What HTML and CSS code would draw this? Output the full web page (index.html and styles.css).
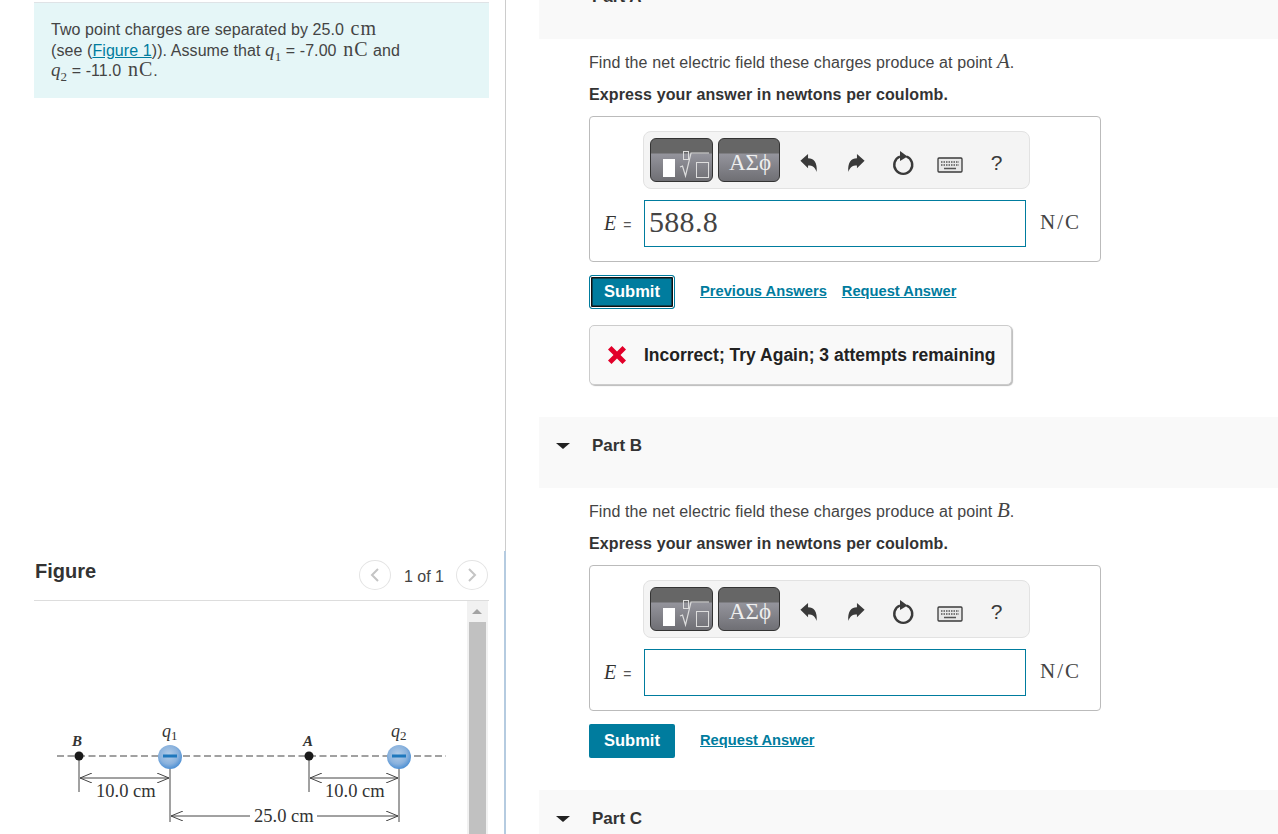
FILE: index.html
```html
<!DOCTYPE html>
<html lang="en">
<head>
  <meta charset="UTF-8">
  <title>Two point charges</title>
  <link rel="stylesheet" href="styles.css">
</head>
<body>
  <div class="page">

    <!-- left column: problem text and figure -->
    <div class="left">
      <div class="intro">
        Two point charges are separated by 25.0 <span class="tex tex-unit">cm</span><br>
        (see (<a href="#">Figure 1</a>)). Assume that <span class="tex"><i>q</i><sub>1</sub></span> = -7.00 <span class="tex tex-unit">nC</span> and<br>
        <span class="tex"><i>q</i><sub>2</sub></span> = -11.0 <span class="tex tex-unit">nC</span>.
      </div>

      <div class="figure-head">
        <span class="figure-title">Figure</span>
        <div class="pager">
          <span class="pager-btn"><svg width="10" height="16" viewBox="0 0 10 16"><path d="M8 2 2 8l6 6" fill="none" stroke="#c4c4c4" stroke-width="2"/></svg></span>
          <span class="pager-text">1 of 1</span>
          <span class="pager-btn"><svg width="10" height="16" viewBox="0 0 10 16"><path d="M2 2l6 6-6 6" fill="none" stroke="#c4c4c4" stroke-width="2"/></svg></span>
        </div>
      </div>

      <div class="figure-body">
        <svg class="diagram" width="435" height="234" viewBox="0 0 435 234">
          <defs>
            <radialGradient id="ball" cx="0.45" cy="0.4" r="0.65">
              <stop offset="0" stop-color="#b4cde8"/>
              <stop offset="0.6" stop-color="#8ab2dd"/>
              <stop offset="1" stop-color="#3f88d2"/>
            </radialGradient>
            <marker id="tip" viewBox="0 0 12 10" refX="12" refY="5" markerWidth="12" markerHeight="10" orient="auto-start-reverse" markerUnits="userSpaceOnUse">
              <path d="M0 0 12 5 0 10" fill="none" stroke="#444" stroke-width="1"/>
            </marker>
          </defs>
          <line x1="23" y1="155" x2="412" y2="155" stroke="#444" stroke-width="1.2" stroke-dasharray="7 3.500"/>
          <g stroke="#444" stroke-width="1" fill="none">
            <line x1="45" y1="155" x2="45" y2="191"/>
            <line x1="136" y1="155" x2="136" y2="221"/>
            <line x1="275" y1="155" x2="275" y2="191"/>
            <line x1="365" y1="155" x2="365" y2="221"/>
            <line x1="46" y1="177" x2="135" y2="177" marker-start="url(#tip)" marker-end="url(#tip)"/>
            <line x1="276" y1="177" x2="364" y2="177" marker-start="url(#tip)" marker-end="url(#tip)"/>
            <line x1="137" y1="215" x2="216" y2="215" marker-start="url(#tip)"/>
            <line x1="283" y1="215" x2="364" y2="215" marker-end="url(#tip)"/>
          </g>
          <circle cx="45" cy="155" r="4.500" fill="#1a1a1a"/>
          <circle cx="275" cy="155" r="4.500" fill="#1a1a1a"/>
          <circle cx="136" cy="156" r="12" fill="url(#ball)"/>
          <circle cx="365" cy="156" r="12" fill="url(#ball)"/>
          <rect x="129" y="153.500" width="14" height="3" fill="#1f78bd"/>
          <rect x="358" y="153.500" width="14" height="3" fill="#1f78bd"/>
          <text class="fig-label" x="38" y="145">B</text>
          <text class="fig-label" x="269" y="145">A</text>
          <text class="fig-q" x="128" y="136">q<tspan class="fig-sub" dy="3">1</tspan></text>
          <text class="fig-q" x="357" y="136">q<tspan class="fig-sub" dy="3">2</tspan></text>
          <text class="fig-dim" x="62" y="196">10.0 cm</text>
          <text class="fig-dim" x="291" y="196">10.0 cm</text>
          <text class="fig-dim" x="220" y="221">25.0 cm</text>
        </svg>
        <div class="scrollbar">
          <span class="scroll-up"></span>
          <span class="scroll-thumb"></span>
        </div>
      </div>
    </div>

    <!-- right column: parts -->
    <div class="right">
      <div class="part-head"><span class="caret"></span><span>Part A</span></div>
      <div class="part-body">
        <p class="question">Find the net electric field these charges produce at point <span class="tex tex-point"><i>A</i></span>.</p>
        <p class="instruction">Express your answer in newtons per coulomb.</p>
        <div class="answer-box">
          <div class="toolbar">
            <span class="tool-btn tool-math">
              <svg width="61" height="42" viewBox="0 0 61 42"><rect x="12" y="20" width="12" height="18" fill="#fff"/><rect x="32.500" y="12.500" width="5" height="8" fill="none" stroke="#ddd"/><path d="M29 28l2.500-1 3 10 5.500-23h18" fill="none" stroke="#ddd" stroke-width="1.200"/><rect x="45.500" y="23.500" width="12" height="15" fill="none" stroke="#ddd"/></svg>
            </span>
            <span class="tool-btn tool-greek">ΑΣϕ</span>
            <span class="tool-icons">
              <span class="tool-slot"><svg width="20" height="21" viewBox="0 0 20 22"><path d="M1 8 9 1v4.500c6 0 10 4.500 9 14.500-1.500-5-4-7-9-7V16z" fill="#3a3a3a"/></svg></span>
              <span class="tool-slot"><svg width="20" height="21" viewBox="0 0 20 22"><path d="M19 8 11 1v4.500c-6 0-10 4.500-9 14.500 1.500-5 4-7 9-7V16z" fill="#3a3a3a"/></svg></span>
              <span class="tool-slot"><svg width="24" height="26" viewBox="0 0 24 26"><path d="M15.500 6.500a9 9 0 1 1-6.500 0" fill="none" stroke="#3a3a3a" stroke-width="2.400"/><path d="M9 1l7.500 5.500L9 11z" fill="#3a3a3a"/></svg></span>
              <span class="tool-slot tool-keys"><svg width="26" height="16" viewBox="0 0 26 16"><rect x="1" y="1" width="24" height="14" rx="1" fill="#e8e8e8" stroke="#3a3a3a" stroke-width="1.300"/><path d="M4 5h18M4 8h18" stroke="#555" stroke-width="1.500" stroke-dasharray="1.500 1"/><path d="M7 11.500h12" stroke="#555" stroke-width="1.500"/></svg></span>
              <span class="tool-slot tool-help">?</span>
            </span>
          </div>
          <div class="answer-row">
            <span class="answer-label"><i>E</i><span class="equals">=</span></span>
            <div class="answer-input">588.8</div>
            <span class="answer-unit">N/C</span>
          </div>
        </div>
        <div class="actions">
          <button class="submit submit-focus">Submit</button>
          <a class="action-link" href="#">Previous Answers</a>
          <a class="action-link" href="#">Request Answer</a>
        </div>
        <div class="feedback">
          <svg width="18" height="18" viewBox="0 0 18 18"><path d="M0 3.500 3.500 0 9 5.500 14.500 0 18 3.500 12.500 9l5.500 5.500-3.500 3.500L9 12.500 3.500 18 0 14.500 5.500 9z" fill="#e2002a"/></svg>
          <span class="feedback-text">Incorrect; Try Again; 3 attempts remaining</span>
        </div>
      </div>

      <div class="part-head"><span class="caret"></span><span>Part B</span></div>
      <div class="part-body">
        <p class="question">Find the net electric field these charges produce at point <span class="tex tex-point"><i>B</i></span>.</p>
        <p class="instruction">Express your answer in newtons per coulomb.</p>
        <div class="answer-box">
          <div class="toolbar">
            <span class="tool-btn tool-math">
              <svg width="61" height="42" viewBox="0 0 61 42"><rect x="12" y="20" width="12" height="18" fill="#fff"/><rect x="32.500" y="12.500" width="5" height="8" fill="none" stroke="#ddd"/><path d="M29 28l2.500-1 3 10 5.500-23h18" fill="none" stroke="#ddd" stroke-width="1.200"/><rect x="45.500" y="23.500" width="12" height="15" fill="none" stroke="#ddd"/></svg>
            </span>
            <span class="tool-btn tool-greek">ΑΣϕ</span>
            <span class="tool-icons">
              <span class="tool-slot"><svg width="20" height="21" viewBox="0 0 20 22"><path d="M1 8 9 1v4.500c6 0 10 4.500 9 14.500-1.500-5-4-7-9-7V16z" fill="#3a3a3a"/></svg></span>
              <span class="tool-slot"><svg width="20" height="21" viewBox="0 0 20 22"><path d="M19 8 11 1v4.500c-6 0-10 4.500-9 14.500 1.500-5 4-7 9-7V16z" fill="#3a3a3a"/></svg></span>
              <span class="tool-slot"><svg width="24" height="26" viewBox="0 0 24 26"><path d="M15.500 6.500a9 9 0 1 1-6.500 0" fill="none" stroke="#3a3a3a" stroke-width="2.400"/><path d="M9 1l7.500 5.500L9 11z" fill="#3a3a3a"/></svg></span>
              <span class="tool-slot tool-keys"><svg width="26" height="16" viewBox="0 0 26 16"><rect x="1" y="1" width="24" height="14" rx="1" fill="#e8e8e8" stroke="#3a3a3a" stroke-width="1.300"/><path d="M4 5h18M4 8h18" stroke="#555" stroke-width="1.500" stroke-dasharray="1.500 1"/><path d="M7 11.500h12" stroke="#555" stroke-width="1.500"/></svg></span>
              <span class="tool-slot tool-help">?</span>
            </span>
          </div>
          <div class="answer-row">
            <span class="answer-label"><i>E</i><span class="equals">=</span></span>
            <div class="answer-input"></div>
            <span class="answer-unit">N/C</span>
          </div>
        </div>
        <div class="actions">
          <button class="submit">Submit</button>
          <a class="action-link" href="#">Request Answer</a>
        </div>
      </div>

      <div class="part-head"><span class="caret"></span><span>Part C</span></div>
    </div>

  </div>
</body>
</html>
```

FILE: styles.css
```css
html, body {
  margin: 0;
  padding: 0;
  height: 834px;
  overflow: hidden;
  background-color: #fff;
}

body {
  font-family: "Liberation Sans", Arial, sans-serif;
  font-size: 16px;
  color: #444;
}

a {
  color: #007c9e;
}

.page {
  display: flex;
  align-items: flex-start;
  height: 834px;
  overflow: hidden;
}

.tex {
  font-family: "Liberation Serif", serif;
  font-size: 19px;
  line-height: 0;
}

.tex sub {
  font-size: 13px;
  line-height: 0;
}

.tex-unit {
  margin-left: 2px;
  font-size: 20px;
  letter-spacing: 1px;
}

/* left column */
.left {
  position: relative;
  flex: none;
  box-sizing: border-box;
  width: 506px;
  height: 834px;
  padding: 2px 16px 0 34px;
  border-right: 1px solid #ccc;
}

.left::after {
  content: "";
  position: absolute;
  top: 551px;
  bottom: 0;
  right: -1px;
  width: 2px;
  background-color: #b5cbe0;
}

.intro {
  box-sizing: border-box;
  height: 96px;
  padding: 17px 17px 0;
  background-color: #e5f6f7;
  border-top: 1px solid #dfe3e6;
  line-height: 20.500px;
  letter-spacing: 0.08px;
}

.figure-head {
  display: flex;
  justify-content: space-between;
  align-items: center;
  height: 46px;
  margin-top: 453px;
  padding-bottom: 3px;
  border-bottom: 1px solid #ddd;
}

.figure-title {
  margin-top: -6px;
  margin-left: 1px;
  font-size: 20px;
  font-weight: bold;
  color: #333;
}

.pager {
  display: flex;
  align-items: center;
  gap: 13px;
  margin-top: 2px;
  margin-right: 1px;
}

.pager-text {
  margin-top: 3px;
  margin-right: -1px;
}

.pager-btn {
  display: flex;
  align-items: center;
  justify-content: center;
  box-sizing: border-box;
  width: 32px;
  height: 30px;
  border: 1px solid #e4e4e4;
  border-radius: 50%;
}

.figure-body {
  position: relative;
  height: 234px;
}

.diagram {
  display: block;
}

.fig-label {
  font-family: "Liberation Serif", serif;
  font-style: italic;
  font-weight: bold;
  font-size: 15px;
  fill: #333;
}

.fig-q {
  font-family: "Liberation Serif", serif;
  font-style: italic;
  font-size: 18px;
  fill: #333;
}

.fig-sub {
  font-style: normal;
  font-size: 13px;
}

.fig-dim {
  font-family: "Liberation Serif", serif;
  font-size: 18.500px;
  fill: #333;
}

.scrollbar {
  position: absolute;
  top: 0;
  right: 1px;
  width: 21px;
  height: 234px;
  background-color: #f1f1f1;
}

.scroll-up {
  position: absolute;
  top: 8px;
  left: 5px;
  border-left: 5px solid transparent;
  border-right: 5px solid transparent;
  border-bottom: 5px solid #a3a3a3;
}

.scroll-thumb {
  position: absolute;
  top: 21px;
  bottom: 0;
  left: 2px;
  width: 17px;
  background-color: #c1c1c1;
}

/* right column */
.right {
  flex: 1;
  margin-top: -32px;
  margin-left: 33px;
}

.part-head {
  display: flex;
  align-items: flex-start;
  gap: 22px;
  box-sizing: border-box;
  height: 71px;
  padding: 19px 0 0 17px;
  background-color: #f9f9f9;
  font-size: 17px;
  font-weight: bold;
  color: #333;
}

.caret {
  margin-top: 7px;
  border-left: 7px solid transparent;
  border-right: 7px solid transparent;
  border-top: 6px solid #222;
}

.part-body {
  padding: 11px 177px 32px 50px;
}

.question {
  margin: 0;
  height: 36px;
  line-height: 26px;
  letter-spacing: 0.1px;
}

.tex-point {
  font-size: 21px;
}

.instruction {
  margin: 0;
  height: 30px;
  line-height: 18px;
  letter-spacing: 0.12px;
  font-weight: bold;
  color: #333;
}

.answer-box {
  box-sizing: border-box;
  height: 146px;
  padding-top: 14px;
  border: 1px solid #bbb;
  border-radius: 4px;
}

.toolbar {
  display: flex;
  gap: 5px;
  box-sizing: border-box;
  width: 387px;
  height: 58px;
  margin-left: 53px;
  padding: 6px;
  background-color: #f4f4f4;
  border: 1px solid #e2e2e2;
  border-radius: 8px;
}

.tool-btn {
  display: flex;
  justify-content: center;
  box-sizing: border-box;
  height: 44px;
  border: 1px solid #333;
  border-radius: 6px;
  background: linear-gradient(#666 0, #666 14px, #94949c 15px, #6f6f74 100%);
  color: #eee;
}

.tool-math {
  width: 63px;
}

.tool-greek {
  align-items: flex-end;
  width: 62px;
  padding-bottom: 6px;
  padding-left: 2px;
  font-family: "Liberation Serif", serif;
  font-size: 23px;
  line-height: 24px;
}

.tool-icons {
  display: flex;
  align-items: center;
  height: 44px;
  padding-top: 3px;
}

.tool-slot {
  display: flex;
  justify-content: center;
  width: 47px;
}

.tool-keys {
  margin-top: 4px;
}

.tool-help {
  font-size: 21px;
  color: #3a3a3a;
}

.answer-row {
  display: flex;
  align-items: center;
  height: 47px;
  margin-top: 11px;
}

.answer-label {
  box-sizing: border-box;
  width: 54px;
  padding-left: 14px;
  font-family: "Liberation Serif", serif;
  font-size: 20px;
  color: #333;
}

.equals {
  margin-left: 7px;
  font-family: "Liberation Sans", sans-serif;
  font-size: 14px;
  color: #555;
}

.answer-input {
  box-sizing: border-box;
  width: 382px;
  height: 47px;
  padding-left: 4px;
  border: 1px solid #007c9e;
  font-family: "Liberation Serif", serif;
  font-size: 30px;
  letter-spacing: 0.3px;
  line-height: 41px;
}

.answer-unit {
  margin-top: -2px;
  margin-left: 14px;
  font-family: "Liberation Serif", serif;
  font-size: 21px;
  letter-spacing: 2px;
}

.actions {
  display: flex;
  align-items: center;
  height: 34px;
  margin-top: 13px;
}

.submit {
  box-sizing: border-box;
  width: 86px;
  height: 34px;
  margin-right: 25px;
  padding: 0 0 2px;
  border: none;
  border-radius: 2px;
  background-color: #007c9e;
  color: #fff;
  font-family: "Liberation Sans", sans-serif;
  font-size: 16.500px;
  font-weight: bold;
}

.submit-focus {
  border: 1px solid #007c9e;
  border-radius: 3px;
  box-shadow: inset 0 0 0 1px #fff, inset 0 0 0 2.500px #111;
}

.action-link {
  margin-right: 15px;
  margin-bottom: 2px;
  font-size: 14.700px;
  font-weight: bold;
}

.feedback {
  display: flex;
  align-items: center;
  gap: 18px;
  box-sizing: border-box;
  width: 423px;
  height: 60px;
  margin-top: 16px;
  padding-left: 18px;
  background-color: #f9f9f9;
  border: 1px solid #ccc;
  border-radius: 5px;
  box-shadow: 1px 1px 1px #bbb;
  font-size: 17.500px;
  font-weight: bold;
  color: #222;
}

.feedback-text {
  margin-top: 1px;
}
```
